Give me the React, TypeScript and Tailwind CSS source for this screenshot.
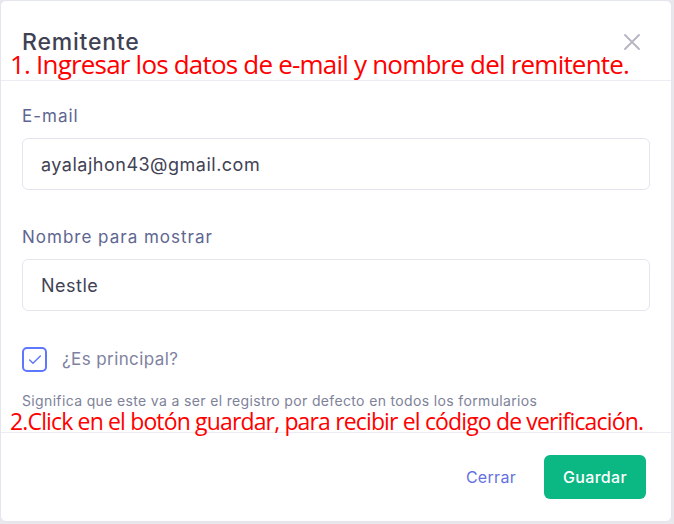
import { Check } from "lucide-react"

export default function App() {
  return (
    <div className="w-[674px] h-[524px] bg-[#e8e8ec] font-['Inter',sans-serif]">
      <div className="relative w-[672px] h-[522px] bg-white border border-[#e4e6ef] rounded-md flex flex-col">
        {/* header */}
        <div className="h-[80px] border-b border-[#ebedf3] flex items-start justify-between pl-[21px] pr-[31px] pt-[30px]">
          <h2 className="text-[23px] font-medium text-[#3f4254] leading-none tracking-[0.8px]">Remitente</h2>
          <svg width="16" height="16" viewBox="0 0 16 16" className="mt-[3px]">
            <path d="M1 1L15 15M15 1L1 15" stroke="#b5b5c3" strokeWidth="1.8" strokeLinecap="round" />
          </svg>
        </div>

        {/* body */}
        <div className="flex-1 px-[21px] pt-[27px]">
          <label className="block text-[17px] text-[#5e6691] leading-none tracking-[1px]">E-mail</label>
          <div className="mt-[13px] h-[52px] border border-[#e4e6ef] rounded-md flex items-center px-[18px] text-[18px] tracking-[0.5px] text-[#3f4254]">
            ayalajhon43@gmail.com
          </div>

          <label className="block mt-[39px] text-[17px] text-[#5e6691] leading-none tracking-[1px]">Nombre para mostrar</label>
          <div className="mt-[13px] h-[52px] border border-[#e4e6ef] rounded-md flex items-center px-[18px] text-[18px] tracking-[0.5px] text-[#3f4254]">
            Nestle
          </div>

          <div className="mt-[36px] flex items-center gap-[15px]">
            <div className="w-[25px] h-[25px] border-2 border-[#5d78ff] rounded-[5px] flex items-center justify-center">
              <Check className="w-[16px] h-[16px] text-[#5d78ff]" strokeWidth={2.2} />
            </div>
            <span className="text-[17px] text-[#7e82a0] tracking-[0.4px]">¿Es principal?</span>
          </div>

          <p className="mt-[17px] text-[14px] text-[#7e8299] tracking-[0.35px]">
            Significa que este va a ser el registro por defecto en todos los formularios
          </p>
        </div>

        {/* footer */}
        <div className="h-[89px] border-t border-[#ebedf3] flex items-start justify-end gap-[28px] pr-[25px] pt-[22px]">
          <button className="h-[44px] text-[16px] text-[#6571e0] tracking-[0.3px]">Cerrar</button>
          <button className="h-[44px] w-[102px] rounded-md bg-[#0bb783] text-white text-[16px] font-medium tracking-[0.3px]">Guardar</button>
        </div>

        {/* annotations */}
        <p className="absolute left-[9px] top-[50px] text-[26px] leading-none text-[#ff0000] font-['Open_Sans',sans-serif] tracking-[-0.8px] whitespace-nowrap">
          1. Ingresar los datos de e-mail y nombre del remitente.
        </p>
        <p className="absolute left-[9px] top-[409px] text-[23px] leading-none text-[#ff0000] font-['Open_Sans',sans-serif] tracking-[-0.85px] whitespace-nowrap">
          2.Click en el botón guardar, para recibir el código de verificación.
        </p>
      </div>
    </div>
  )
}
